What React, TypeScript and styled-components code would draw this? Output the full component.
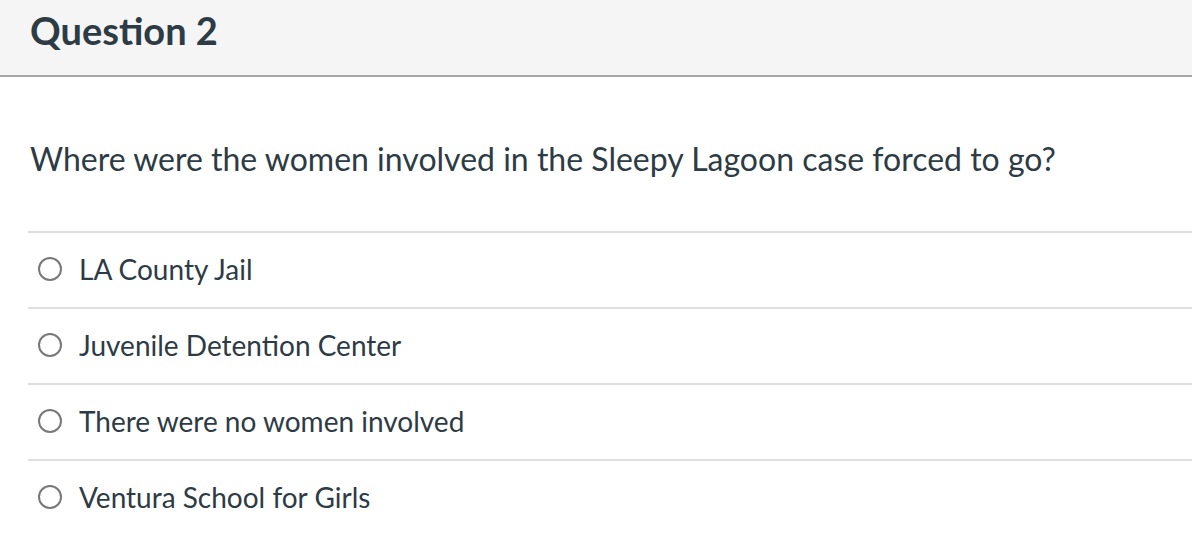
import React from "react";
import styled, { createGlobalStyle } from "styled-components";

const GlobalStyle = createGlobalStyle`
  html, body {
    margin: 0;
    padding: 0;
    background: #fff;
  }
  body {
    font-family: Lato, "Liberation Sans", sans-serif;
    color: #2d3b45;
  }
`;

const Page = styled.div`
  width: 1192px;
  height: 548px;
  overflow: hidden;
  background: #fff;
`;

const Header = styled.div`
  height: 77px;
  box-sizing: border-box;
  display: flex;
  align-items: flex-start;
  padding: 8px 0 0 30px;
  background: #f5f5f5;
  border-bottom: 2px solid #a5a5a5;
`;

const Title = styled.h2`
  margin: 0;
  font-size: 38px;
  line-height: 44px;
  font-weight: 700;
  color: #2d3b45;
`;

const Body = styled.div`
  padding-left: 28px;
`;

const QuestionText = styled.p`
  margin: 0;
  padding: 64px 0 0 2px;
  height: 90px;
  font-size: 32px;
  line-height: 36px;
  color: #2d3b45;
`;

const AnswerList = styled.div`
  display: flex;
  flex-direction: column;
`;

const Answer = styled.label`
  display: flex;
  align-items: center;
  gap: 17px;
  box-sizing: border-box;
  height: 76px;
  padding: 0 0 2px 10px;
  border-top: 2px solid #dedede;
  font-size: 28px;
  line-height: 32px;
  color: #2d3b45;
`;

const Radio = styled.span`
  width: 24px;
  height: 24px;
  box-sizing: border-box;
  border-radius: 50%;
  border: 2px solid #787878;
  flex-shrink: 0;
`;

const answers = [
  "LA County Jail",
  "Juvenile Detention Center",
  "There were no women involved",
  "Ventura School for Girls",
];

const App: React.FC = () => {
  return (
    <Page>
      <GlobalStyle />
      <Header>
        <Title>Question 2</Title>
      </Header>
      <Body>
        <QuestionText>
          Where were the women involved in the Sleepy Lagoon case forced to go?
        </QuestionText>
        <AnswerList>
          {answers.map((a) => (
            <Answer key={a}>
              <Radio />
              {a}
            </Answer>
          ))}
        </AnswerList>
      </Body>
    </Page>
  );
};

export default App;
